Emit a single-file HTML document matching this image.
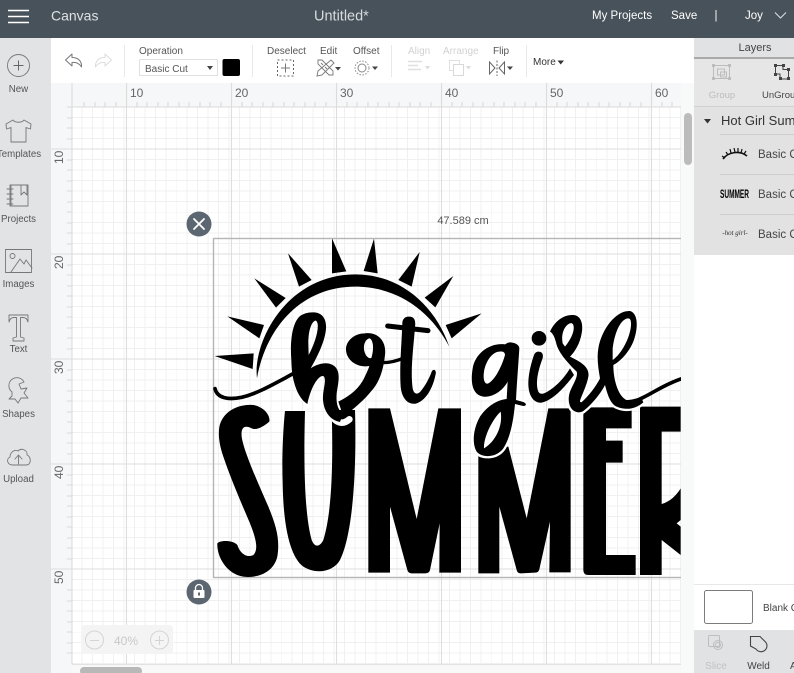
<!DOCTYPE html>
<html><head><meta charset="utf-8"><style>
html,body{margin:0;padding:0;background:#fff;overflow:hidden}
svg{display:block;font-family:"Liberation Sans",sans-serif}
</style></head><body>
<svg width="794" height="673" viewBox="0 0 794 673" xmlns="http://www.w3.org/2000/svg">
<defs>
<pattern id="g" x="72" y="107" width="105" height="105" patternUnits="userSpaceOnUse" patternTransform="translate(-0.5 0)">
<path d="M0 0V105M10.5 0V105M21 0V105M31.5 0V105M42 0V105M52.5 0V105M63 0V105M73.5 0V105M84 0V105M94.5 0V105M0 0H105M0 10.5H105M0 21H105M0 31.5H105M0 42H105M0 52.5H105M0 63H105M0 73.5H105M0 84H105M0 94.5H105" stroke="#f0f0f0" stroke-width="1" fill="none"/>
</pattern>
<clipPath id="art"><rect x="205" y="230" width="476" height="360"/></clipPath>
</defs>
<rect width="794" height="673" fill="#fff"/>
<rect x="72" y="107" width="609" height="557" fill="url(#g)"/>
<path d="M126.5 83V664M231.5 83V664M336.5 83V664M441.5 83V664M546.5 83V664M651.5 83V664M51 149H681M51 254H681M51 359H681M51 464H681M51 569H681" stroke="#dedede" stroke-width="1.100" fill="none"/>
<!-- rulers -->
<rect x="51" y="83" width="643" height="24" fill="#f6f7f8"/>
<rect x="51" y="83" width="21" height="590" fill="#f6f7f8"/>
<path d="M126.5 83V107M231.5 83V107M336.5 83V107M441.5 83V107M546.5 83V107M651.5 83V107M51 149H72M51 254H72M51 359H72M51 464H72M51 569H72" stroke="#dcdcdc" stroke-width="1.100"/>
<path d="M72 83V664M67 107H681" stroke="#dadada" stroke-width="1"/>
<path d="M84 102V107M95 102V107M105 102V107M116 102V107M137 102V107M147 102V107M158 102V107M168 102V107M179 102V107M189 102V107M200 102V107M210 102V107M221 102V107M242 102V107M252 102V107M263 102V107M273 102V107M284 102V107M294 102V107M305 102V107M315 102V107M326 102V107M347 102V107M357 102V107M368 102V107M378 102V107M389 102V107M399 102V107M410 102V107M420 102V107M431 102V107M452 102V107M462 102V107M473 102V107M483 102V107M494 102V107M504 102V107M515 102V107M525 102V107M536 102V107M557 102V107M567 102V107M578 102V107M588 102V107M599 102V107M609 102V107M620 102V107M630 102V107M641 102V107M662 102V107M672 102V107" stroke="#cfcfcf" stroke-width=".8"/>
<path d="M67 118H72M67 128H72M67 139H72M67 160H72M67 170H72M67 181H72M67 191H72M67 202H72M67 212H72M67 223H72M67 233H72M67 244H72M67 265H72M67 275H72M67 286H72M67 296H72M67 307H72M67 317H72M67 328H72M67 338H72M67 349H72M67 370H72M67 380H72M67 391H72M67 401H72M67 412H72M67 422H72M67 433H72M67 443H72M67 454H72M67 475H72M67 485H72M67 496H72M67 506H72M67 517H72M67 527H72M67 538H72M67 548H72M67 559H72M67 590H72M67 601H72M67 611H72M67 622H72M67 632H72M67 643H72M67 653H72" stroke="#cfcfcf" stroke-width=".8"/>
<g font-size="12" fill="#666">
<text x="130" y="97">10</text><text x="235" y="97">20</text><text x="340" y="97">30</text><text x="445" y="97">40</text><text x="550" y="97">50</text><text x="655" y="97">60</text>
<text transform="translate(63 164) rotate(-90)">10</text><text transform="translate(63 269) rotate(-90)">20</text><text transform="translate(63 374) rotate(-90)">30</text><text transform="translate(63 479) rotate(-90)">40</text><text transform="translate(63 584) rotate(-90)">50</text>
</g>
<!-- bottom strip / right strip -->
<rect x="72" y="664" width="622" height="9" fill="#f8f8f8"/>
<path d="M72 664.5H681" stroke="#e2e2e2"/>
<rect x="681" y="83" width="13" height="590" fill="#f8f9f9"/>
<rect x="684" y="113" width="8" height="52" rx="4" fill="#bcbcbc"/>
<rect x="80" y="667" width="62" height="8" rx="4" fill="#b8b8b8"/>
<!-- selection box -->
<rect x="213.5" y="238.5" width="480" height="339" fill="none" stroke="#b5b5b5" stroke-width="1.400" clip-path="url(#art)"/>
<text x="463" y="224" font-size="11" fill="#555" text-anchor="middle">47.589 cm</text>
<!-- ARTWORK -->
<g clip-path="url(#art)">
<!-- sun -->
<g transform="translate(200 230) scale(.33333)" fill="#000">
<path d="M44 378L161 370L158 417Z"/><path d="M82 259L192 285L178 325Z"/><path d="M163 145L257 204L228 233Z"/><path d="M264 70L335 150L297 170Z"/><path d="M396 25L439 124L396 130Z"/><path d="M522 26L533 130L491 123Z"/><path d="M659 66L635 170L595 150Z"/><path d="M760 138L706 232L674 203Z"/><path d="M845 250L755 325L737 285Z"/>
<path d="M171 445C158 340 255 135 465 133C600 133 705 225 748 350C690 240 590 170 465 170C310 170 200 285 171 445Z"/>
</g>
<!-- SUMMER S U M -->
<g transform="translate(200 400) scale(.33333)" fill="#000">
<path d="M57 90C60 40 110 10 160 15C190 20 212 45 208 65C190 80 170 92 155 85C135 75 122 80 125 110C130 150 170 240 205 320C230 380 240 420 232 470C220 520 170 535 130 530C80 522 50 470 52 430C60 420 100 420 112 435C120 460 140 475 160 465C175 450 170 420 150 370C120 300 90 230 70 170C60 140 55 115 57 90Z"/>
<path d="M255 33L315 33C312 150 310 330 335 420C345 445 360 440 370 420C395 340 400 200 395 30L465 30C470 200 460 400 420 480C400 515 350 525 310 500C270 470 250 380 248 250C245 170 250 80 255 33Z"/>
<path d="M505 25L570 25L650 357L715 25L783 25L783 518L718 518L719 370L690 510Q688 520 675 520L635 520Q625 520 622 510L570 320L570 518L505 518Z"/>
</g>
<!-- M E R -->
<g transform="translate(460 300) scale(.33333)" fill="#000">
<path d="M55 440L145 440L200 655L265 325L332 325L332 817L268 817L270 665L238 808Q235 818 225 818L182 820Q172 820 170 810L118 620L118 820L55 820Z"/>
<path d="M370 345Q372 322 395 322L515 322L515 385L438 385L438 422L488 422L488 488L438 488L438 765L527 765L527 825L385 825Q370 825 370 810Z"/>
<path d="M540 320L662 320L662 395L605 395L605 612C630 605 650 585 662 565L662 660L650 670L662 680L662 765L605 720L605 825L540 825Z"/>
</g>
<!-- hot (zoom coords) -->
<g transform="translate(290 300) scale(.33333)" fill="#000" fill-rule="evenodd" stroke-linejoin="round">
<path d="M125 345C135 365 155 378 178 358" fill="none" stroke="#fff" stroke-width="20" stroke-linecap="round"/>
<path d="M70 37C95 37 110 55 108 85C106 120 85 165 62 205C85 190 110 185 128 195C155 210 145 245 140 280C137 310 145 335 160 338L150 366C120 360 102 335 99 300C97 270 112 238 100 228C85 225 62 262 52 312C25 295 5 250 4 180C0 130 5 70 30 48C45 38 58 37 70 37ZM76 62C65 65 55 90 55 130L56 165C72 135 86 95 83 72C81 64 79 61 76 62Z"/>
<path d="M225 100C265 95 290 125 285 165C280 215 265 250 245 272C225 298 190 328 160 350L145 305C172 292 205 270 222 235C232 215 236 205 238 198C200 205 166 178 168 145C170 120 195 100 225 100ZM232 118C222 125 218 145 226 162C232 174 240 176 244 174C250 155 252 130 243 118C240 114 236 114 232 118Z"/>
<path d="M250 186C285 192 315 186 345 172" fill="none" stroke="#000" stroke-width="10"/>
<path d="M355 50C372 48 378 60 375 80C372 130 360 210 368 265C372 285 385 285 395 270C410 250 420 230 425 215C430 205 440 210 437 222C430 260 410 300 380 310C355 317 335 295 332 260C328 200 335 130 337 70C337 58 345 50 355 50Z"/>
<path d="M293 78L414 92" fill="none" stroke="#000" stroke-width="15" stroke-linecap="round"/>
</g>
<!-- swash left of hot -->
<g transform="translate(200 230) scale(.33333)" fill="none" stroke="#000" stroke-linecap="round">
<path d="M45 476C52 505 85 510 125 502C175 490 225 460 285 428" stroke-width="11"/>
</g>
<!-- girl -->
<g transform="translate(470 305) scale(.33333)" fill="#000" fill-rule="evenodd" stroke-linejoin="round">
<g stroke="#fff" fill="#fff" stroke-width="14">
<path d="M120 112C135 112 148 120 148 130C145 180 140 240 138 285L160 291C175 298 165 306 155 302L135 297C130 350 120 400 100 430C80 458 35 460 20 440C5 415 10 370 30 335C50 305 80 285 110 282L113 230C100 255 70 278 40 275C10 270 0 240 8 190C15 145 60 112 105 118C110 115 115 112 120 112Z"/>
<path d="M240 80C255 45 285 28 310 30C335 32 340 60 335 85C330 115 315 140 300 155C330 170 360 185 355 215C350 245 330 280 330 290C335 295 345 290 350 285L340 318C336 321 330 322 325 322C300 320 290 290 300 260C310 235 325 215 320 200C300 180 270 150 260 120C255 100 250 85 240 80Z"/>
<path d="M480 18C505 25 505 70 490 110C475 145 450 170 430 180C430 215 440 275 475 288C490 292 500 288 515 280L520 292C500 310 470 318 440 305C425 298 415 280 405 240C395 260 370 295 340 318L325 300C350 280 375 250 390 220C385 190 380 160 385 130C395 70 440 15 480 18Z"/>
</g>
<path d="M120 112C135 112 148 120 148 130C145 180 140 240 138 285L160 291C175 298 165 306 155 302L135 297C130 350 120 400 100 430C80 458 35 460 20 440C5 415 10 370 30 335C50 305 80 285 110 282L113 230C100 255 70 278 40 275C10 270 0 240 8 190C15 145 60 112 105 118C110 115 115 112 120 112ZM97 140C70 135 48 165 42 200C38 225 45 240 55 235C75 225 95 185 105 150C105 145 102 141 97 140ZM92 320C65 345 40 400 42 430C70 415 100 370 92 320Z"/>
<path d="M205 140C218 140 222 150 216 165C205 195 195 235 205 260C212 272 225 265 240 255C265 238 285 215 300 190L312 210C285 245 250 285 215 293C190 295 175 270 175 235C175 205 185 170 192 150C195 143 200 140 205 140Z"/>
<circle cx="207" cy="100" r="22"/>
<path d="M240 80C255 45 285 28 310 30C335 32 340 60 335 85C330 115 315 140 300 155C330 170 360 185 355 215C350 245 330 280 330 290C335 295 345 290 350 285L340 318C336 321 330 322 325 322C300 320 290 290 300 260C310 235 325 215 320 200C300 180 270 150 260 120C255 100 250 85 240 80ZM300 55C285 60 272 85 278 115L285 125C305 100 315 75 310 60C308 55 304 53 300 55Z"/>
<path d="M480 18C505 25 505 70 490 110C475 145 450 170 430 180C430 215 440 275 475 288C490 292 500 288 515 280L520 292C500 310 470 318 440 305C425 298 415 280 405 240C395 260 370 295 340 318L325 300C350 280 375 250 390 220C385 190 380 160 385 130C395 70 440 15 480 18ZM475 40C455 40 435 75 428 130L428 165C450 150 475 110 482 70C485 50 482 40 475 40Z"/>
</g>
<g transform="translate(460 300) scale(.33333)" fill="none" stroke="#000" stroke-linecap="round">
<path d="M490 304C540 315 585 262 665 236" stroke-width="11"/>
</g>
</g>
<!-- close + lock -->
<circle cx="199" cy="224" r="12.500" fill="#5b6670"/>
<path d="M194 219L204 229M204 219L194 229" stroke="#fff" stroke-width="1.800" stroke-linecap="round"/>
<circle cx="199" cy="592" r="12.500" fill="#5b6670"/>
<rect x="193.500" y="590" width="11" height="8" rx="1" fill="#fff"/>
<path d="M195.500 590V588A3.500 3.500 0 0 1 202.500 588V590" stroke="#fff" stroke-width="1.300" fill="none"/>
<rect x="198" y="592.500" width="2" height="3" fill="#5b6670"/>
<!-- zoom -->
<rect x="81" y="625" width="92" height="29" rx="4" fill="#f4f4f4"/>
<g fill="none" stroke="#d4d4d4" stroke-width="1">
<circle cx="94.500" cy="640" r="9"/><circle cx="159.500" cy="640" r="9"/>
<path d="M90 640.500H99M155 640.500H164M159.500 636V645"/>
</g>
<text x="126" y="645" font-size="12" fill="#c8c8c8" text-anchor="middle">40%</text>
<!-- header -->
<rect width="794" height="38" fill="#48525a"/>
<path d="M8 10.500H29M8 16.500H29M8 22.500H29" stroke="#fff" stroke-width="1.600"/>
<text x="51" y="20.500" font-size="14" fill="#dfe2e4">Canvas</text>
<text x="314" y="20.500" font-size="14.500" fill="#d8dcdf">Untitled*</text>
<g font-size="11.500" fill="#fff">
<text x="592" y="19">My Projects</text>
<text x="671" y="19">Save</text>
<text x="714.500" y="19">|</text>
<text x="745" y="19">Joy</text>
</g>
<path d="M775 12.500L780.500 18L786 12.500" stroke="#dfe2e4" fill="none"/>
<!-- toolbar -->
<rect x="51" y="38" width="643" height="45" fill="#fff"/>
<path d="M124.500 45V77M252.500 45V77M391.500 45V77M526.500 45V77" stroke="#e8e8e8"/>
<path d="M65.500 60L72 54V57.500C78 57.500 82 61 81.500 67C79 63 76 62 72 62.500V66Z" fill="none" stroke="#777" stroke-width="1" stroke-linejoin="round"/>
<path d="M111.500 60L105 54V57.500C99 57.500 95 61 95.500 67C98 63 101 62 105 62.500V66Z" fill="none" stroke="#dcdcdc" stroke-width="1" stroke-linejoin="round"/>
<g font-size="10" fill="#555">
<text x="139" y="54">Operation</text>
<text x="267" y="54">Deselect</text>
<text x="320" y="54">Edit</text>
<text x="353" y="54">Offset</text>
<text x="493" y="54">Flip</text>
<text x="533" y="65" fill="#333">More</text>
</g>
<g font-size="10" fill="#d2d2d2">
<text x="408" y="54">Align</text>
<text x="443" y="54">Arrange</text>
</g>
<rect x="139.500" y="59.500" width="78" height="16" rx="1" fill="#fff" stroke="#e0e0e0"/>
<text x="145" y="72" font-size="10" fill="#555">Basic Cut</text>
<path d="M207 66L213 66L210 70Z" fill="#444"/>
<rect x="222.500" y="59" width="17.500" height="17" rx="2" fill="#000"/>
<rect x="277.500" y="60" width="16" height="16" fill="none" stroke="#666" stroke-dasharray="2 2"/>
<path d="M281 68H290M285.500 63.500V72.500" stroke="#777"/>
<g fill="none" stroke="#777" stroke-width=".9">
<path d="M318 60L322 60L333 71L333 75L329 75L318 64Z"/>
<path d="M331 60L334 63L322 75L317 76L318 71Z"/>
<path d="M321 63L323 65M325 67L327 69"/>
</g>
<path d="M335 67H341L338 70.500Z" fill="#444"/>
<circle cx="362" cy="68" r="4" fill="none" stroke="#888"/>
<circle cx="362" cy="68" r="7" fill="none" stroke="#888" stroke-dasharray="1.500 1.500"/>
<path d="M372 66.500H378L375 70Z" fill="#444"/>
<path d="M408 61.500H422M408 65.500H418M408 69.500H421" stroke="#e0e0e0" stroke-width="1.500"/>
<path d="M425 66H430L427.500 69.500Z" fill="#dcdcdc"/>
<rect x="449.500" y="60.500" width="10" height="10" fill="none" stroke="#e0e0e0"/>
<rect x="453.500" y="64.500" width="10" height="11" fill="#fff" stroke="#d8d8d8"/>
<path d="M466 66H471L468.500 69.500Z" fill="#dcdcdc"/>
<path d="M497 60.500V76" stroke="#666" stroke-dasharray="2 1.500"/>
<path d="M489.500 62L495 68L489.500 74ZM504.500 62L499 68L504.500 74Z" fill="none" stroke="#666"/>
<path d="M507 66.500H513L510 70Z" fill="#444"/>
<path d="M557.500 60.500H564L560.700 64.500Z" fill="#333"/>
<!-- left panel -->
<rect y="38" width="51" height="635" fill="#e2e3e4"/>
<circle cx="18.500" cy="65.500" r="11" fill="none" stroke="#777" stroke-width=".9"/>
<path d="M13.500 65.500H23.500M18.500 60.500V70.500" stroke="#666" stroke-width="1"/>
<g font-size="9.700" fill="#555" text-anchor="middle">
<text x="18.500" y="92">New</text>
<text x="19" y="157">Templates</text>
<text x="18.500" y="222">Projects</text>
<text x="18.500" y="287">Images</text>
<text x="18.500" y="352">Text</text>
<text x="18.500" y="417">Shapes</text>
<text x="18.500" y="482">Upload</text>
</g>
<g fill="none" stroke="#777" stroke-width=".9" stroke-linejoin="round" stroke-linecap="round">
<path d="M13 120C15 123 22 123 24 120L31 124L30.500 129L26 127.500V142H11V127.500L6.500 129L6 124Z"/>
<rect x="10" y="185" width="18" height="21"/>
<path d="M7 189H13M7 194H13M7 199H13M7 204H13M11 185V206M21 185V195L24 192L27 195V185"/>
<rect x="5.500" y="249.500" width="26" height="23"/>
<circle cx="12.500" cy="256" r="2.500"/>
<path d="M11 272L20 259L24 264L26 260L32 268"/>
<path d="M9 315H28V322C27 319 26 317.500 23 317.500H20.500V337L24 338V341H13V338L16.500 337V317.500H14C11 317.500 10 319 9 322Z"/>
<path d="M24 382A8 8 0 1 0 12 392L12 396L9 399L15 399L18 403L21 398L28 398L24 393L27 388L21 389L19 384Z"/>
<path d="M13 465C7 465 6 459 10 457C10 452 15 449 18 451C22 447 28 451 27 455C31 456 32 465 26 465Z"/>
<path d="M18.500 464V455M15 459L18.500 455L22 459"/>
</g>
<!-- right panel -->
<rect x="694" y="38" width="100" height="19" fill="#e1e2e3"/>
<rect x="694" y="57" width="100" height="2" fill="#a9a9a9"/>
<rect x="694" y="59" width="100" height="47" fill="#e6e6e7"/>
<rect x="694" y="106" width="100" height="149" fill="#e2e2e3"/>
<rect x="694" y="255" width="100" height="330" fill="#fff"/>
<path d="M694 106.500H794" stroke="#d0d0d0"/>
<path d="M694 584.500H794" stroke="#e8e8e8"/>
<text x="755" y="51" font-size="11" fill="#444" text-anchor="middle">Layers</text>
<g fill="none" stroke="#bdbdbd">
<rect x="713.500" y="65.500" width="16" height="13"/>
<rect x="717.500" y="69" width="7" height="6"/><rect x="720.500" y="72" width="6" height="5"/>
</g>
<path d="M712 64h3v3h-3zM728 64h3v3h-3zM712 77h3v3h-3zM728 77h3v3h-3z" fill="#bdbdbd"/>
<path d="M775.500 65.500H783V69.500H788.500V79H780V74H775.500Z" fill="none" stroke="#444"/>
<path d="M774 64h3v3h-3zM782 64h3v3h-3zM787 68h3v3h-3zM787 77h3v3h-3zM779 77h3v3h-3zM774 73h3v3h-3z" fill="#444"/>
<text x="722" y="98" font-size="9.500" fill="#bcbcbc" text-anchor="middle">Group</text>
<text x="762" y="98" font-size="9.500" fill="#444">UnGroup</text>
<path d="M704 119H711L707.500 123.500Z" fill="#333"/>
<text x="721" y="125" font-size="13" fill="#333">Hot Girl Summer</text>
<path d="M720 134.500H794M720 174.500H794M720 214.500H794" stroke="#cdcdcd"/>
<g font-size="11.500" fill="#444">
<text x="758" y="158">Basic Cut</text>
<text x="758" y="198">Basic Cut</text>
<text x="758" y="238">Basic Cut</text>
</g>
<path d="M723 159C728 152 740 150 747 156" fill="none" stroke="#111" stroke-width="1.600"/>
<path d="M722 156L725 158M726 152L728 155M730 149L731 153M734 148L735 152M738 148L738 152M742 149L741 153M746 151L744 154" stroke="#111" stroke-width="1.200"/>
<text x="720" y="198" font-size="12" font-weight="bold" fill="#000" textLength="29" lengthAdjust="spacingAndGlyphs">SUMMER</text>
<text x="735" y="235" font-size="7" font-style="italic" fill="#333" text-anchor="middle" font-family="Liberation Serif">-hot girl-</text>
<rect x="704.500" y="590.500" width="48" height="33" rx="2" fill="#fff" stroke="#7c7c7c"/>
<text x="763" y="611" font-size="10" fill="#444">Blank Canvas</text>
<rect x="694" y="630" width="100" height="43" fill="#e1e2e3"/>
<g fill="none" stroke="#bdbdbd">
<rect x="708.500" y="635.500" width="11" height="11" rx="1"/>
<circle cx="718" cy="645" r="4.500"/><circle cx="718" cy="645" r="2.500"/>
</g>
<path d="M750.500 636.500H760L766 642.500A5.500 5.500 0 1 1 756 649L750.500 646Z" fill="none" stroke="#444" stroke-width="1.100"/>
<text x="716" y="669" font-size="10" fill="#c2c2c2" text-anchor="middle">Slice</text>
<text x="758.500" y="669" font-size="10" fill="#444" text-anchor="middle">Weld</text>
<text x="790" y="669" font-size="10" fill="#444">Attach</text>
</svg>
</body></html>
